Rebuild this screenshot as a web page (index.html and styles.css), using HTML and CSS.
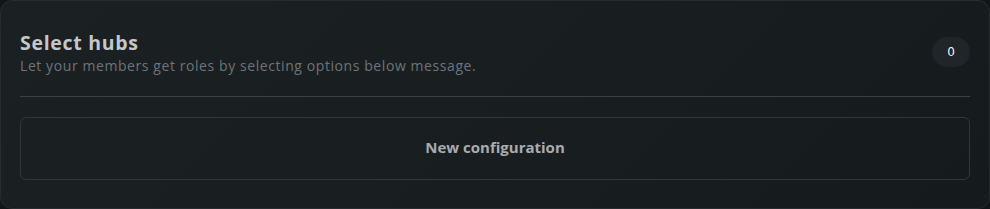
FILE: index.html
```html
<!DOCTYPE html>
<html lang="en">
<head>
<meta charset="utf-8">
<title>Select hubs</title>
<link rel="stylesheet" href="styles.css">
</head>
<body>
<section class="card">
  <header class="card-head">
    <div class="head-text">
      <h2 class="title">Select hubs</h2>
      <p class="subtitle">Let your members get roles by selecting options below message.</p>
    </div>
    <span class="badge">0</span>
  </header>
  <hr class="divider">
  <button class="new-btn" type="button">New configuration</button>
</section>
</body>
</html>
```

FILE: styles.css
```css
html, body {
  margin: 0;
  padding: 0;
  background: #121618;
}
body {
  width: 990px;
  height: 209px;
  overflow: hidden;
}
.card {
  box-sizing: border-box;
  width: 990px;
  height: 209px;
  border: 1px solid #262c2f;
  border-radius: 12px;
  background: linear-gradient(135deg, #1b2023 0%, #181e20 60%, #151b1d 100%);
  padding: 26px 19px 0 19px;
  font-family: "Open Sans", "DejaVu Sans", sans-serif;
}
.card-head {
  display: flex;
  align-items: center;
  justify-content: space-between;
  height: 52px;
}
.head-text {
  display: flex;
  flex-direction: column;
}
.title {
  margin: 0;
  font-size: 19.5px;
  line-height: 26px;
  font-weight: 700;
  color: #c4c7c9;
  letter-spacing: 0.7px;
}
.subtitle {
  margin: 0;
  font-size: 14px;
  line-height: 20px;
  color: #6e7478;
  letter-spacing: 0.58px;
}
.badge {
  display: inline-flex;
  align-items: center;
  justify-content: center;
  width: 38px;
  height: 30px;
  border-radius: 15px;
  background: #1f2528;
  color: #f0f2f3;
  font-family: "DejaVu Sans", sans-serif;
  font-size: 12px;
  margin-top: -2px;
}
.divider {
  margin: 17px 0 0;
  border: 0;
  height: 1px;
  background: #3a4043;
}
.new-btn {
  display: block;
  box-sizing: border-box;
  width: 100%;
  height: 63px;
  margin-top: 20px;
  padding-bottom: 4px;
  border: 1px solid #30363a;
  border-radius: 6px;
  background: transparent;
  color: #a8acaf;
  font-family: "Open Sans", "DejaVu Sans", sans-serif;
  font-size: 15px;
  font-weight: 700;
  cursor: pointer;
}
```
